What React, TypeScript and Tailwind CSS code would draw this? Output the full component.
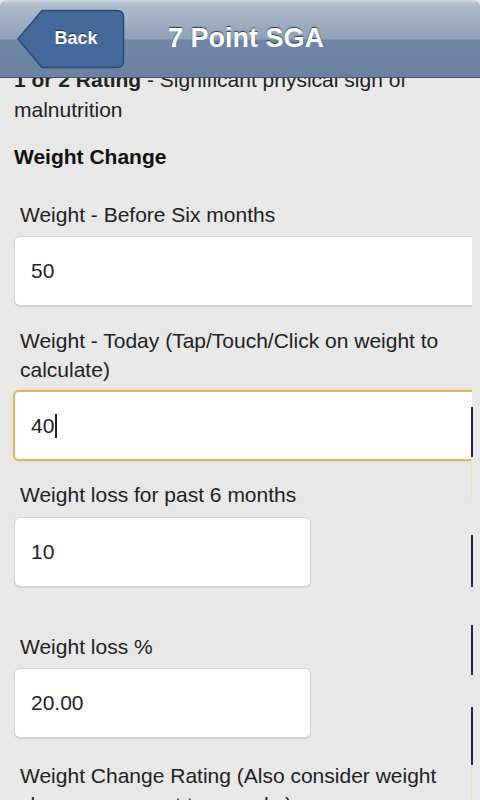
const font = { fontFamily: '"Liberation Sans", Arial, sans-serif' };

function BackButton() {
  return (
    <div className="relative w-[108px] h-[60px] shrink-0">
      <svg width="108" height="60" viewBox="0 0 108 60" className="absolute inset-0">
        <path
          d="M1 30 L25 1.5 L100 1.5 Q106.5 1.5 106.5 8 L106.5 52 Q106.5 58.5 100 58.5 L25 58.5 Z"
          fill="#46699c"
          stroke="#2c4a77"
          strokeWidth="1.5"
        />
      </svg>
      <span className="absolute inset-0 flex items-center justify-center pl-[10px] text-white font-bold text-[18px] [text-shadow:0_-1px_0_#1f3556]">
        Back
      </span>
    </div>
  );
}

function Label({ children }: { children: React.ReactNode }) {
  return <div className="pl-[20px] text-[21px] leading-[29px] text-[#222]">{children}</div>;
}

function Input({ value, wide, focused }: { value: string; wide?: boolean; focused?: boolean }) {
  return (
    <div
      className={
        "flex items-center pl-[16px] bg-white rounded-[6px] text-[21px] text-[#222] " +
        (wide ? "w-[480px] " : "w-[297px] ") +
        (focused
          ? "h-[71px] ml-[13px] border-2 border-[#e2b665] shadow-[0_0_2px_#f0cf90]"
          : "h-[70px] ml-[14px] border border-[#d4d4d4] shadow-[0_1px_1px_#cfcfcf]")
      }
    >
      {value}
      {focused && <span className="w-[1.5px] h-[24px] bg-[#222] ml-[1px]" />}
    </div>
  );
}

export default function App() {
  return (
    <div style={font} className="relative w-[480px] h-[800px] overflow-hidden bg-[#e8e8e8]">
      <div className="w-[472px] h-full overflow-hidden pt-[65px] flex flex-col">
        <div className="pl-[14px] text-[21px] leading-[30px] text-[#222]">
          <span className="font-bold">1 or 2 Rating</span> - Significant physical sign of
          <br />
          malnutrition
        </div>
        <div className="pl-[14px] mt-[17px] font-bold text-[21px] leading-[30px] text-[#111]">Weight Change</div>

        <div className="mt-[28px] flex flex-col gap-[7px]">
          <Label>Weight - Before Six months</Label>
          <Input value="50" wide />
        </div>

        <div className="mt-[20px] flex flex-col gap-[6px]">
          <Label>
            Weight - Today (Tap/Touch/Click on weight to
            <br />
            calculate)
          </Label>
          <Input value="40" wide focused />
        </div>

        <div className="mt-[19px] flex flex-col gap-[8px]">
          <Label>Weight loss for past 6 months</Label>
          <Input value="10" />
        </div>

        <div className="mt-[45px] flex flex-col gap-[7px]">
          <Label>Weight loss %</Label>
          <Input value="20.00" />
        </div>

        <div className="mt-[23px]">
          <Label>
            Weight Change Rating (Also consider weight
            <br />
            change over past two weeks)
          </Label>
        </div>
      </div>

      {/* right edge scroll marks */}
      <div className="absolute left-[471px] top-[407px] w-[2px] h-[50px] bg-[#2b2240]" />
      <div className="absolute left-[471px] top-[457px] w-[1px] h-[40px] bg-[#f3dcc0]" />
      <div className="absolute left-[471px] top-[535px] w-[2px] h-[52px] bg-[#2b2240]" />
      <div className="absolute left-[471px] top-[625px] w-[2px] h-[50px] bg-[#2b2240]" />
      <div className="absolute left-[471px] top-[707px] w-[2px] h-[58px] bg-[#2b2240]" />
      <div className="absolute left-[471px] top-[765px] w-[1px] h-[35px] bg-[#f3dcc0]" />

      <div className="absolute top-0 left-0 w-full h-[78px] rounded-t-[6px] border-b border-[#44536a] bg-[linear-gradient(to_bottom,#d3d9e1_0px,#b1bdcc_4px,#8fa0b7_39px,#6f86a6_40px,#6a81a1_77px)] flex items-center pl-[17px]">
        <BackButton />
        <div className="ml-[43px] text-white font-bold text-[27px] [text-shadow:0_-1px_1px_#2a3a52]">7 Point SGA</div>
      </div>
    </div>
  );
}
